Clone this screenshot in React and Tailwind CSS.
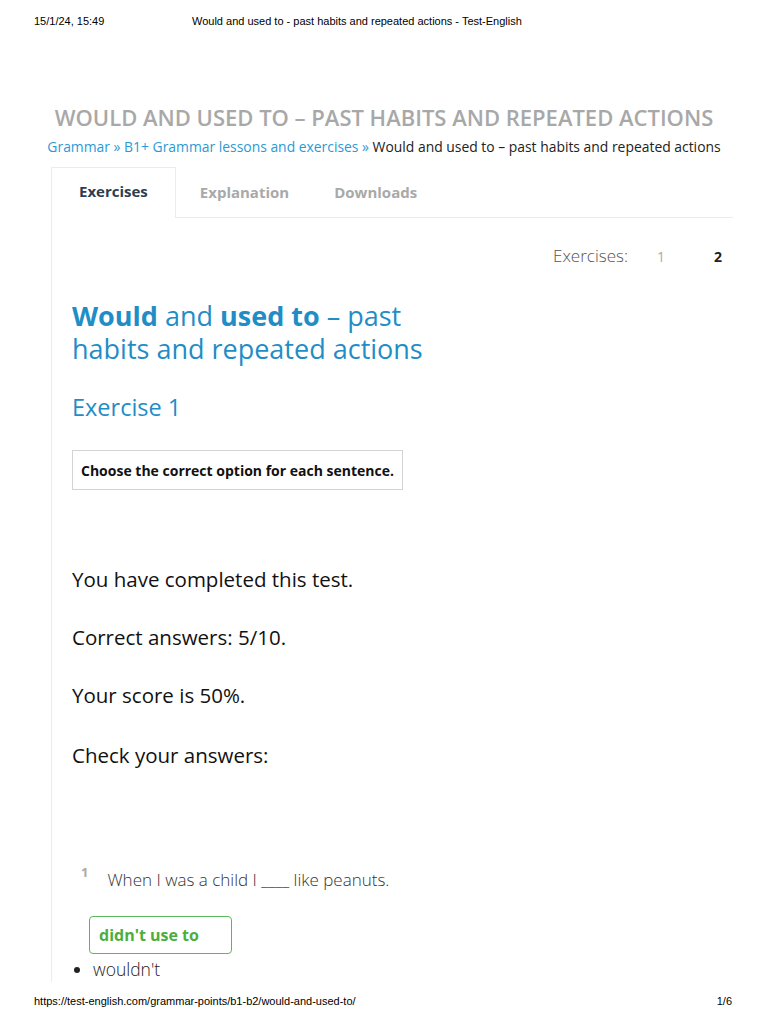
import React from 'react';

const sans = "font-['Open_Sans','Noto_Sans',sans-serif]";

const Header = () => (
  <div className="flex items-center px-[34px] pt-[15px] text-[11px] leading-[13px] text-black font-['Liberation_Sans',Arial,sans-serif]">
    <span className="w-[158px]">15/1/24, 15:49</span>
    <span>Would and used to - past habits and repeated actions - Test-English</span>
  </div>
);

const Tabs = () => (
  <div className="flex ml-[51px] mr-[35px] mt-[10px]">
    <div className="h-[51px] px-[27px] pt-[12px] border border-b-0 border-[#ececec] text-[15px] font-bold text-[#2c3e50]">
      Exercises
    </div>
    <div className="flex-1 flex border-b border-[#ececec] text-[15px] font-bold text-[#a9a9a9] pt-[14px]">
      <span className="pl-[24px] pr-[22px]">Explanation</span>
      <span className="pl-[23px]">Downloads</span>
    </div>
  </div>
);

const App = () => {
  return (
    <div className={`w-[768px] h-[1024px] bg-white flex flex-col overflow-hidden ${sans}`}>
      <Header />
      <div className="flex-1 flex flex-col min-h-0">
        <h1 className="mt-[75px] text-center text-[22px] leading-[28px] font-semibold text-[#a8a8a8] uppercase">
          Would and used to – past habits and repeated actions
        </h1>
        <p className="mt-[6px] text-center text-[13.9px] leading-[20px] text-[#222]">
          <span className="text-[#2a9ad6]">Grammar » B1+ Grammar lessons and exercises » </span>
          Would and used to – past habits and repeated actions
        </p>
        <Tabs />
        <div className="ml-[51px] mr-[35px] h-[764px] border-l border-[#ececec] flex flex-col pl-[20px] pr-[11px]">
          <div className="flex justify-end items-center mt-[27px] h-[22px] text-[#555]">
            <span className="text-[17px] font-light">Exercises:</span>
            <span className="ml-[29px] text-[14px] text-[#aaa]">1</span>
            <span className="ml-[49px] text-[14px] font-bold text-[#222]">2</span>
          </div>
          <h2 className="mt-[32px] text-[27px] leading-[33px] text-[#1f8dc6]">
            <b>Would</b> and <b>used to</b> – past<br />habits and repeated actions
          </h2>
          <h3 className="mt-[27px] text-[23.5px] leading-[30px] text-[#1f8dc6]">Exercise 1</h3>
          <div className="mt-[28px] self-start h-[40px] flex items-center pl-[8px] pr-[8px] border border-[#d4d4d4] whitespace-nowrap text-[14px] font-bold text-[#111]">
            Choose the correct option for each sentence.
          </div>
          <div className="mt-[76px] text-[20.5px] leading-[26px] text-[#111]">
            <p>You have completed this test.</p>
            <p className="mt-[32px]">Correct answers: 5/10.</p>
            <p className="mt-[32px]">Your score is 50%.</p>
            <p className="mt-[34px]">Check your answers:</p>
          </div>
          <div className="mt-[101px] flex items-start">
            <span className="ml-[9px] mt-[-3px] text-[13px] leading-[12px] font-bold text-[#aaa]">1</span>
            <span className="ml-[19px] text-[17px] leading-[22px] font-light text-[#333]">When I was a child I ____ like peanuts.</span>
          </div>
          <div className="mt-[25px] ml-[17px] w-[143px] h-[38px] flex items-center px-[9px] rounded-[4px] border-[1.5px] border-[#5cb85c] text-[16px] font-bold text-[#4cae3c]">
            didn't use to
          </div>
          <ul className="mt-[4px] list-disc pl-[21px] text-[17.5px] leading-[22px] font-light text-[#222]">
            <li>wouldn't</li>
          </ul>
        </div>
      </div>
      <div className="flex justify-between items-center px-[34px] pb-[16px] text-[11px] leading-[13px] text-black font-['Liberation_Sans',Arial,sans-serif]">
        <span>https://test-english.com/grammar-points/b1-b2/would-and-used-to/</span>
        <span className="pr-[2px]">1/6</span>
      </div>
    </div>
  );
};

export default App;
